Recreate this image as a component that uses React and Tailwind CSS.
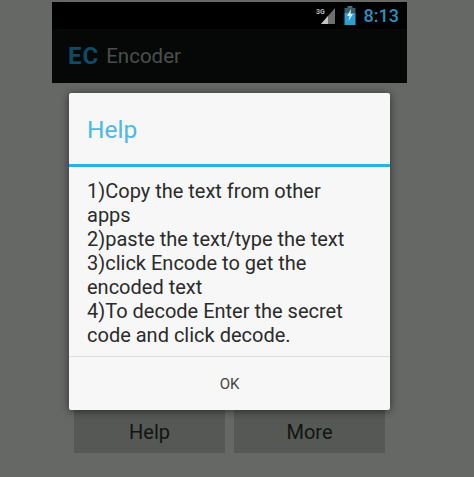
import { useState } from 'react';

function StatusIcons() {
  return (
    <div className="flex items-center">
      <svg width="20" height="20" viewBox="0 0 20 20" className="mr-[8px]">
        <polygon points="19,2 19,18 5,18" fill="#6e6e6e" />
        <polygon points="12,10 12,18 5,18" fill="#c4c4c4" />
        <text x="0" y="8" fontSize="7" fontWeight="700" fill="#b8b8b8" fontFamily="Roboto, sans-serif">3G</text>
      </svg>
      <svg width="12" height="19" viewBox="0 0 12 19" className="mr-[8px]">
        <rect x="3.5" y="0" width="5" height="2" fill="#3f6f85" />
        <rect x="0.5" y="2" width="11" height="5" fill="#3d5a68" />
        <rect x="0.5" y="7" width="11" height="12" fill="#2f9fd2" />
        <polygon points="7,3 3,10 5.5,10 4.5,15 9,8 6.5,8" fill="#d5eef8" />
      </svg>
      <span className="text-[18px] leading-none font-medium text-[#2f8fbf]">8:13</span>
    </div>
  );
}

export default function App() {
  const [open] = useState(true);

  return (
    <div className="relative w-[474px] h-[477px] overflow-hidden bg-[#666865] font-['Roboto',sans-serif]">
      <div className="ml-[52px] w-[355px] pt-[2px]">
        <div className="h-[27px] bg-black flex items-center justify-end pr-[8px]">
          <StatusIcons />
        </div>
        <div className="h-[54px] bg-[#050807] flex items-center pl-[16px]">
          <span className="text-[24px] tracking-[1px] font-bold text-[#0f4a66] mr-[7px]">EC</span>
          <span className="text-[20.5px] text-[#4c4f4e]">Encoder</span>
        </div>
        <div className="mt-[327px] flex gap-[9px] pl-[22px]">
          {['Help', 'More'].map(b => (
            <button key={b} className="w-[151px] h-[43px] bg-[#555855] text-[#111412] text-[20px] flex items-center justify-center">
              {b}
            </button>
          ))}
        </div>
      </div>

      {open && (
        <div className="absolute left-[69px] top-[93px] w-[321px] h-[317px] bg-[#f7f7f7] rounded-[2px] shadow-[0_1px_8px_rgba(0,0,0,0.55)] flex flex-col">
          <div className="h-[71px] flex items-center pl-[18px] pt-[4px] text-[24.5px] text-[#4fb8e6]">Help</div>
          <div className="h-[3px] bg-[#2eb0e0]" />
          <div className="h-[189px] pl-[18px] pr-[30px] pt-[12px] text-[20px] leading-[24px] text-[#2b2b2b]">
            1)Copy the text from other apps<br />
            2)paste the text/type the text<br />
            3)click Encode to get the encoded text<br />
            4)To decode Enter the secret code and click decode.
          </div>
          <div className="h-px bg-[#dddddd]" />
          <button className="flex-1 pt-[2px] text-[15px] text-[#444444]">OK</button>
        </div>
      )}
    </div>
  );
}
